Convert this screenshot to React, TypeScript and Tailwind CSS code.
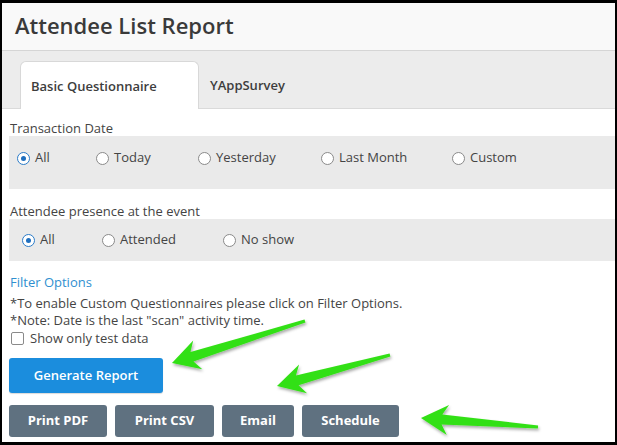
import React from "react";

type Pt = [number, number];

// green call-out arrow: tip points at the target, tail trails off thin
const arrowPoints = (tip: Pt, tail: Pt) => {
  const dx = tail[0] - tip[0];
  const dy = tail[1] - tip[1];
  const len = Math.hypot(dx, dy);
  const ux = dx / len;
  const uy = dy / len;
  const px = -uy;
  const py = ux;
  const local: Pt[] = [
    [0, 0],
    [27, -15],
    [21, -5],
    [len, -1.5],
    [len, 1.5],
    [21, 5],
    [27, 15],
  ];
  return local
    .map(([a, b]) => `${(tip[0] + ux * a + px * b).toFixed(1)},${(tip[1] + uy * a + py * b).toFixed(1)}`)
    .join(" ");
};

const Radio = ({ label, checked, width }: { label: string; checked?: boolean; width: string }) => (
  <div className={`flex items-center gap-[5px] ${width}`}>
    <span
      className={`w-[13px] h-[13px] rounded-full bg-white flex items-center justify-center border ${
        checked ? "border-[#2a7bc8]" : "border-[#8a8a8a]"
      }`}
    >
      {checked && <span className="w-[5px] h-[5px] rounded-full bg-[#1f6fbf]" />}
    </span>
    <span>{label}</span>
  </div>
);

const App: React.FC = () => {
  const arrows: [Pt, Pt][] = [
    [[172, 363], [305, 321]],
    [[277, 386], [390, 355]],
    [[421, 418], [538, 427]],
  ];

  return (
    <div className="relative w-[617px] h-[445px] overflow-hidden bg-white border-black border-l-2 border-r-2 border-t-[3px] border-b-[3px] font-['Open_Sans',sans-serif] text-[#444]">
      <div className="h-[48px] bg-[#f9f9f9] border-b border-[#d5d5d5] flex items-center pl-[13px] pb-[2px]">
        <h1 className="text-[22px] font-semibold text-[#3a3a3a]">Attendee List Report</h1>
      </div>

      <div className="h-[58px] bg-[#ececec] border-b border-[#dadada] flex items-end pl-[18px] text-[13px] font-semibold text-[#3d3d3d]">
        <div className="w-[179px] h-[48px] -mb-px bg-white border border-b-0 border-[#d8d8d8] rounded-t-[6px] flex items-center pl-[10px] pt-[3px]">
          Basic Questionnaire
        </div>
        <div className="h-[48px] flex items-center pl-[11px] pt-[3px]">YAppSurvey</div>
      </div>

      <div className="pl-[7px] text-[13px]">
        <div className="mt-[11px] h-[16px] leading-[17px] pl-px">Transaction Date</div>
        <div className="h-[53px] bg-[#eaeaea] pt-[13px] pl-[8px]">
          <div className="flex h-[18px] items-center">
            <Radio label="All" checked width="w-[79px]" />
            <Radio label="Today" width="w-[102px]" />
            <Radio label="Yesterday" width="w-[123px]" />
            <Radio label="Last Month" width="w-[131px]" />
            <Radio label="Custom" width="w-[90px]" />
          </div>
        </div>

        <div className="mt-[14px] h-[16px] leading-[17px] pl-px">Attendee presence at the event</div>
        <div className="h-[42px] bg-[#eaeaea] pt-[12px] pl-[13px]">
          <div className="flex h-[18px] items-center">
            <Radio label="All" checked width="w-[80px]" />
            <Radio label="Attended" width="w-[121px]" />
            <Radio label="No show" width="w-[90px]" />
          </div>
        </div>

        <div className="mt-[13px] h-[17px] leading-[17px] pl-px text-[#2f8fd0]">Filter Options</div>
        <div className="mt-[4px] h-[17px] leading-[17px] pl-px">
          *To enable Custom Questionnaires please click on Filter Options.
        </div>
        <div className="h-[17px] leading-[17px] pl-px">*Note: Date is the last "scan" activity time.</div>
        <div className="mt-[1px] h-[17px] flex items-center gap-[6px] pl-[2px]">
          <span className="w-[13px] h-[13px] border border-[#8a8a8a] bg-white rounded-[2px]" />
          <span>Show only test data</span>
        </div>

        <button className="mt-[11px] w-[154px] h-[35px] rounded-[3px] bg-[#1b8ddd] text-white font-semibold text-[13px] shadow-[0_1px_1px_rgba(0,0,0,0.15)]">
          Generate Report
        </button>

        <div className="mt-[12px] flex gap-[8px] text-white font-bold text-[13px]">
          <button className="w-[98px] h-[32px] rounded-[3px] bg-[#5f7180]">Print PDF</button>
          <button className="w-[99px] h-[32px] rounded-[3px] bg-[#5f7180]">Print CSV</button>
          <button className="w-[72px] h-[32px] rounded-[3px] bg-[#5f7180]">Email</button>
          <button className="w-[97px] h-[32px] rounded-[3px] bg-[#5f7180]">Schedule</button>
        </div>
      </div>

      <svg className="absolute -left-[2px] -top-[3px] pointer-events-none" width="617" height="445" viewBox="0 0 617 445">
        <defs>
          <filter id="arrowShadow" x="-20%" y="-40%" width="140%" height="180%">
            <feDropShadow dx="1" dy="2" stdDeviation="1.5" floodColor="#000" floodOpacity="0.35" />
          </filter>
        </defs>
        {arrows.map(([tip, tail], i) => (
          <polygon key={i} points={arrowPoints(tip, tail)} fill="#33e015" filter="url(#arrowShadow)" strokeLinejoin="round" />
        ))}
      </svg>
    </div>
  );
};

export default App;
